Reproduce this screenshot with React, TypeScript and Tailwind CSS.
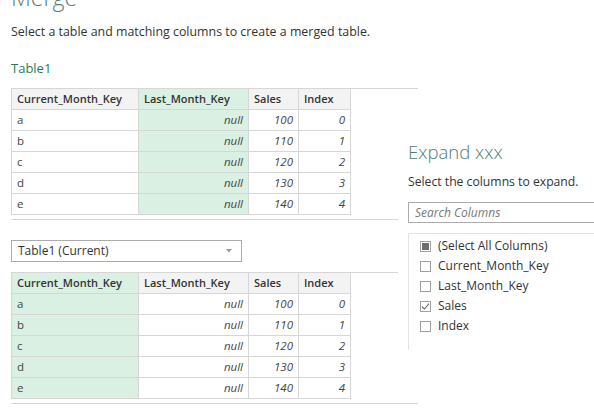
import React from "react";

const rows = [
  ["a", "null", "100", "0"],
  ["b", "null", "110", "1"],
  ["c", "null", "120", "2"],
  ["d", "null", "130", "3"],
  ["e", "null", "140", "4"],
];

function DataTable({ hl }: { hl: number }) {
  const heads = ["Current_Month_Key", "Last_Month_Key", "Sales", "Index"];
  return (
    <div className="w-[407px] border-t border-b border-[#d6d6d6] pb-[4px]">
      <div className="grid w-max grid-cols-[127px_110px_50px_52px] border-l border-[#d6d6d6]">
        {heads.map((h, i) => (
          <div
            key={h}
            className={`h-[21px] border-r border-b border-[#d6d6d6] pl-[5px] text-[11px] font-semibold leading-[20px] text-[#333] ${
              i === hl ? "bg-[#d9f0e3]" : "bg-[#f3f3f3]"
            }`}
          >
            {h}
          </div>
        ))}
        {rows.map((r) =>
          r.map((c, i) => (
            <div
              key={r[0] + i}
              className={`h-[21px] border-r border-b border-[#d6d6d6] text-[11.5px] leading-[20px] text-[#444] ${
                i === 0 ? "pl-[5px]" : "pr-[5px] text-right italic"
              } ${i === hl ? "bg-[#d9f0e3]" : "bg-white"}`}
            >
              {c}
            </div>
          ))
        )}
      </div>
    </div>
  );
}

function Check({ state }: { state: "none" | "all" | "part" }) {
  return (
    <span className="flex h-[11px] w-[11px] items-center justify-center border border-[#a0a0a0] bg-white">
      {state === "part" && <span className="h-[7px] w-[7px] bg-[#6e6e6e]" />}
      {state === "all" && (
        <svg width="9" height="9" viewBox="0 0 9 9">
          <path d="M1 4.6 L3.4 7 L8 1.6" fill="none" stroke="#666" strokeWidth="1.1" />
        </svg>
      )}
    </span>
  );
}

export default function App() {
  const items: [string, "none" | "all" | "part"][] = [
    ["(Select All Columns)", "part"],
    ["Current_Month_Key", "none"],
    ["Last_Month_Key", "none"],
    ["Sales", "all"],
    ["Index", "none"],
  ];
  return (
    <div
      className="relative h-[413px] w-[594px] overflow-hidden bg-white pl-[11px]"
      style={{ fontFamily: '"Open Sans", "Noto Sans", sans-serif' }}
    >
      <div className="mt-[-17px] text-[23px] font-light leading-[28px] text-[#5c7f77]">Merge</div>
      <div className="mt-[12px] text-[12.4px] leading-[18px] text-[#333]">
        Select a table and matching columns to create a merged table.
      </div>
      <div className="mt-[18px] text-[13px] leading-[18px] text-[#2e7a58]">Table1</div>
      <div className="mt-[11px]">
        <DataTable hl={1} />
      </div>
      <div className="mt-[20px] flex h-[22px] w-[231px] items-center justify-between border border-[#ababab] pl-[6px] pr-[9px] text-[12px] text-[#333]">
        <span>Table1 (Current)</span>
        <svg width="6" height="4" viewBox="0 0 6 4">
          <path d="M0 0 H6 L3 3.5 Z" fill="#9a9a9a" />
        </svg>
      </div>
      <div className="mt-[10px]">
        <DataTable hl={0} />
      </div>

      <div className="absolute left-[398px] top-[130px] h-[228px] w-[196px] bg-white pl-[10px] pt-[10px]">
        <div className="text-[18.5px] font-light leading-[24px] text-[#4f7d75]">Expand xxx</div>
        <div className="mt-[9px] text-[12.2px] leading-[18px] text-[#333]">Select the columns to expand.</div>
        <div className="mt-[11px] flex h-[21px] w-[200px] items-center border border-[#ababab] pl-[6px] text-[12px] italic text-[#777]">
          Search Columns
        </div>
        <div className="mt-[10px] h-[117px] border-l border-t border-[#e3e3e3] pl-[11px] pt-[2px]">
          {items.map(([label, st]) => (
            <div key={label} className="flex h-[20px] items-center gap-[7px] text-[12px] text-[#333]">
              <Check state={st} />
              <span>{label}</span>
            </div>
          ))}
        </div>
      </div>
    </div>
  );
}
